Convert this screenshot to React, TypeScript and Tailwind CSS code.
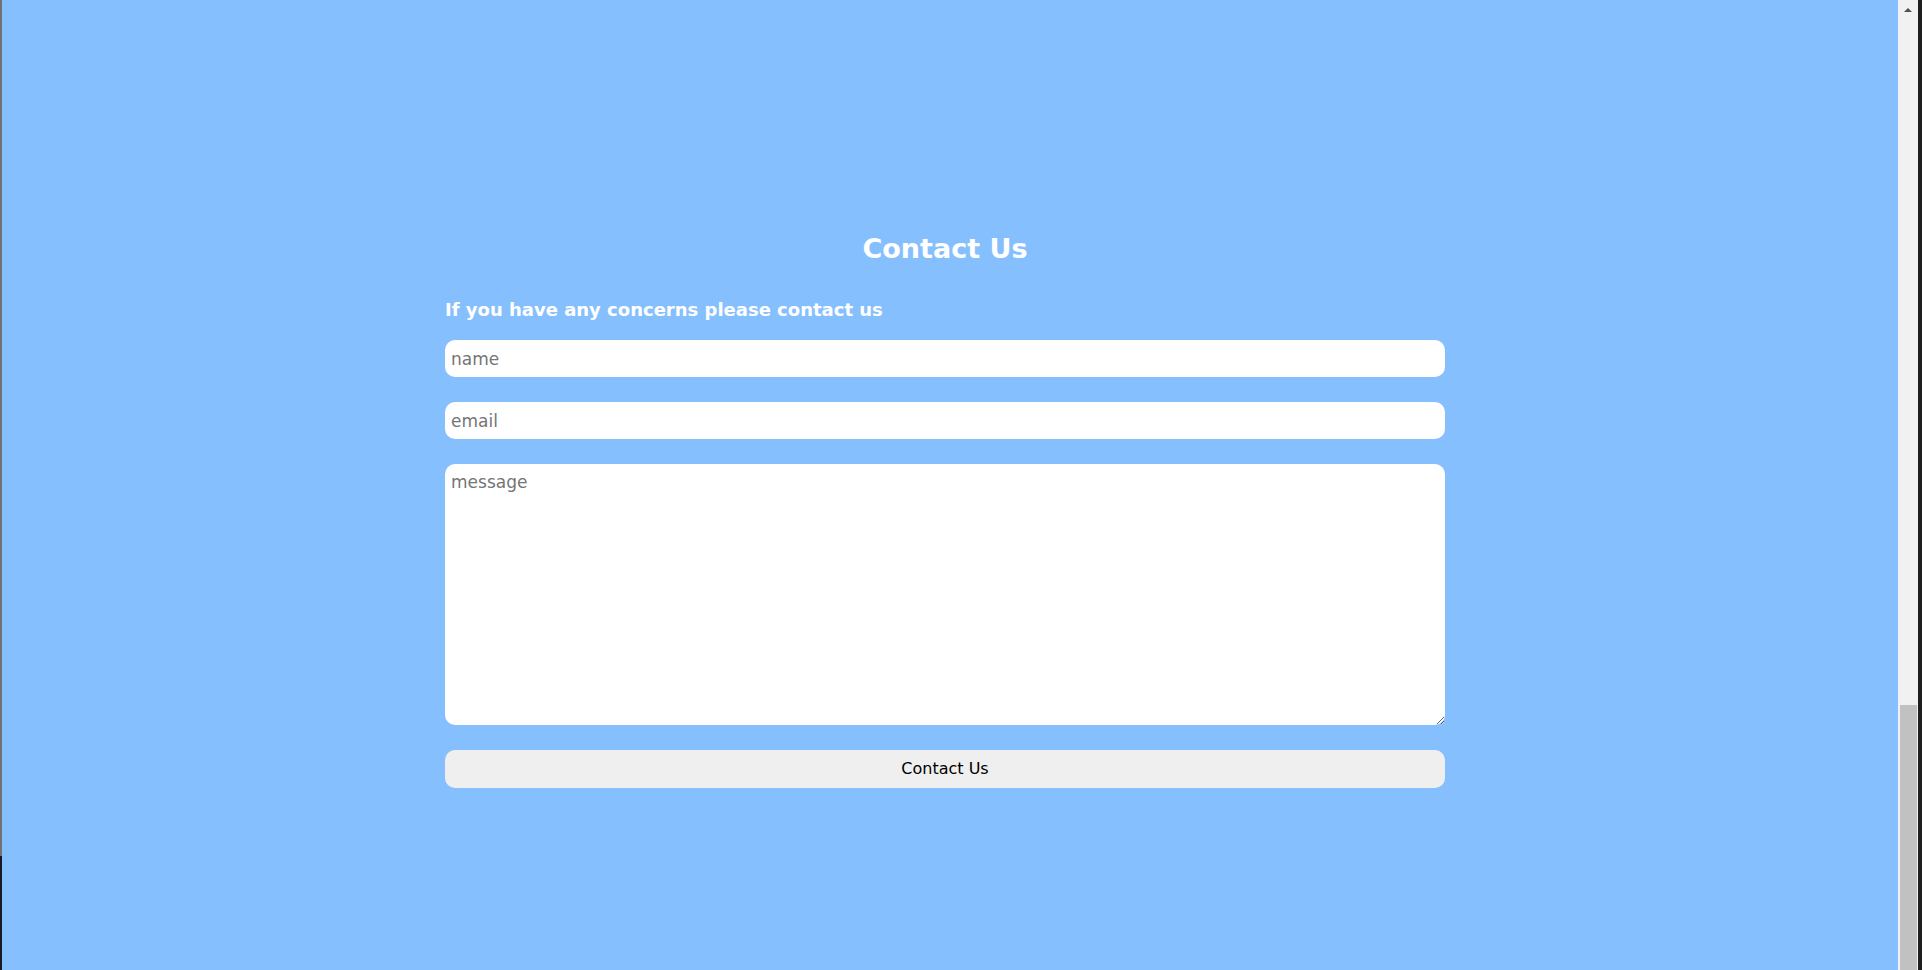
import React from "react";

export default function App() {
  return (
    <div className="flex h-[970px] w-full overflow-hidden font-['DejaVu_Sans',sans-serif]">
      <div className="flex w-[2px] flex-col">
        <div className="h-[856px] bg-[#727272]" />
        <div className="flex-1 bg-[#141a2a]" />
      </div>
      <main className="flex flex-1 justify-center bg-[#86bffd] pr-[10px]">
        <div className="flex w-[1000px] flex-col pt-[228px]">
          <h1 className="text-center text-[27px] font-semibold leading-[42px] text-white">Contact Us</h1>
          <h2 className="mt-[25px] text-[18px] font-bold leading-[30px] text-white">
            If you have any concerns please contact us
          </h2>
          <form className="mt-[15px] flex flex-col gap-[25px]" onSubmit={(e) => e.preventDefault()}>
            <input
              type="text"
              placeholder="name"
              className="h-[37px] w-full rounded-[10px] bg-white px-[6px] text-[17px] text-black outline-none placeholder:text-[#757575]"
            />
            <input
              type="email"
              placeholder="email"
              className="h-[37px] w-full rounded-[10px] bg-white px-[6px] text-[17px] text-black outline-none placeholder:text-[#757575]"
            />
            <textarea
              placeholder="message"
              className="h-[261px] w-full rounded-[10px] bg-white px-[6px] pb-[4px] pt-[6px] text-[17px] text-black outline-none placeholder:text-[#757575]"
            />
            <button
              type="submit"
              className="h-[38px] w-full rounded-[10px] bg-[#efefef] text-[16px] text-black"
            >
              Contact Us
            </button>
          </form>
        </div>
      </main>
      <div className="relative w-[20px] bg-[#f1f1f1]">
        <div className="absolute left-1/2 top-[8px] h-0 w-0 -translate-x-1/2 border-x-[4px] border-b-[4px] border-x-transparent border-b-[#505050]" />
        <div className="absolute bottom-0 left-[2px] right-[1px] top-[705px] bg-[#c1c1c1]" />
      </div>
      <div className="w-[4px] bg-[#1e1e1e]" />
    </div>
  );
}
